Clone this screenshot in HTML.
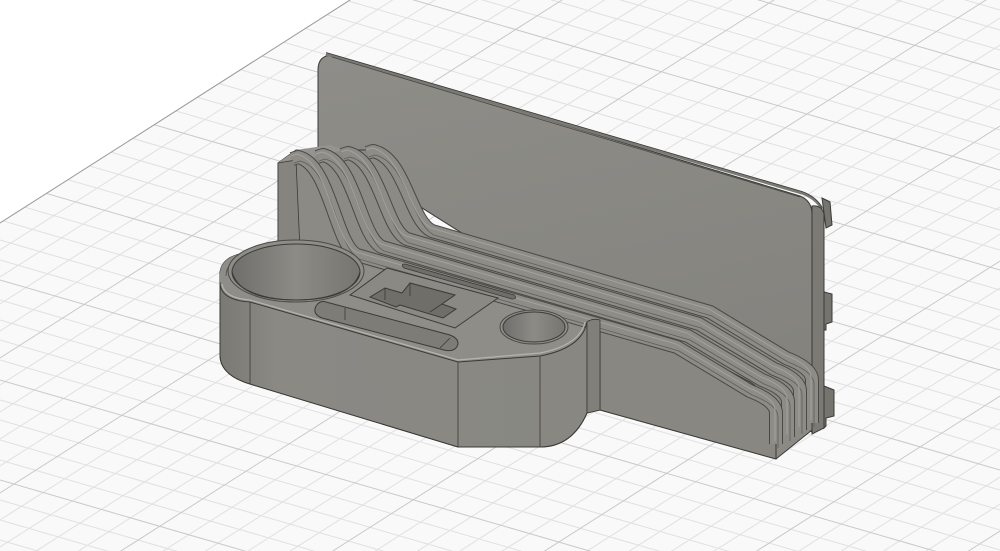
<!DOCTYPE html>
<html><head><meta charset="utf-8">
<style>
html,body{margin:0;padding:0;background:#fff;overflow:hidden;width:1000px;height:551px}
svg{display:block}
</style></head>
<body>
<svg width="1000" height="551" viewBox="0 0 1000 551" xmlns="http://www.w3.org/2000/svg">
<defs>
<clipPath id="plane"><polygon points="0,223 350,0 1000,0 1000,551 0,551"/></clipPath>
<linearGradient id="plate" x1="0" y1="0" x2="0.3" y2="1">
<stop offset="0" stop-color="#8e8d88"/><stop offset="1" stop-color="#84837e"/></linearGradient>
<linearGradient id="hole" x1="0" y1="0" x2="1" y2="0">
<stop offset="0" stop-color="#6f6e6a"/><stop offset="0.5" stop-color="#8c8b86"/><stop offset="1" stop-color="#76756f"/></linearGradient>
<linearGradient id="front" x1="0" y1="0" x2="1" y2="0">
<stop offset="0" stop-color="#7a7974"/><stop offset="0.15" stop-color="#8a8984"/><stop offset="1" stop-color="#888782"/></linearGradient>
<path id="b3" d="M367,153 L373,151 C405,158 410,221 432,231 L710,312 L786,358 Q812,368 812,380 L812,423"/>
<path id="b2" d="M342,155 L348,153 C380,160 385,229 407,239 L699,324 L774,369 Q800,379 800,391 L800,430"/>
<path id="b1" d="M317,157 L323,155 C355,162 360,237 382,247 L688,336 L762,380 Q788,390 788,402 L788,437"/>
<path id="b0" d="M292,159 L298,157 C330,164 335,244 357,255 L677,347 L750,391 Q776,401 776,413 L776,444"/>
</defs>
<rect width="1000" height="551" fill="#ffffff"/>
<g clip-path="url(#plane)">
<rect width="1000" height="551" fill="#f9f9f9"/>
<path fill="none" stroke="#e0e0e0" stroke-width="1" d="M0 -300L1000 -10M0 -280L1000 10M0 -260L1000 30M0 -240L1000 50M0 -200L1000 90M0 -180L1000 110M0 -160L1000 130M0 -140L1000 150M0 -100L1000 190M0 -80L1000 210M0 -60L1000 230M0 -40L1000 250M0 0L1000 290M0 20L1000 310M0 40L1000 330M0 60L1000 350M0 100L1000 390M0 120L1000 410M0 140L1000 430M0 160L1000 450M0 200L1000 490M0 220L1000 510M0 240L1000 530M0 260L1000 550M0 300L1000 590M0 320L1000 610M0 340L1000 630M0 360L1000 650M0 400L1000 690M0 420L1000 710M0 440L1000 730M0 460L1000 750M0 500L1000 790M0 520L1000 810M0 540L1000 830
M0 250L1000 -387M0 277L1000 -360M0 304L1000 -333M0 331L1000 -306M0 385L1000 -252M0 412L1000 -225M0 439L1000 -198M0 466L1000 -171M0 520L1000 -117M0 547L1000 -90M0 574L1000 -63M0 601L1000 -36M0 655L1000 18M0 682L1000 45M0 709L1000 72M0 736L1000 99M0 790L1000 153M0 817L1000 180M0 844L1000 207M0 871L1000 234M0 925L1000 288M0 952L1000 315M0 979L1000 342M0 1006L1000 369M0 1060L1000 423M0 1087L1000 450M0 1114L1000 477M0 1141L1000 504M0 1195L1000 558M0 1222L1000 585"/>
<path fill="none" stroke="#c9c9c9" stroke-width="1" d="M0 -220L1000 70M0 -120L1000 170M0 -20L1000 270M0 80L1000 370M0 180L1000 470M0 280L1000 570M0 380L1000 670M0 480L1000 770
M0 223L1000 -414M0 358L1000 -279M0 493L1000 -144M0 628L1000 -9M0 763L1000 126M0 898L1000 261M0 1033L1000 396M0 1168L1000 531"/>
</g>
<line x1="0" y1="223" x2="350" y2="0" stroke="#9a9a9a" stroke-width="1"/>

<!-- backplate -->
<path d="M318,70 Q318,55 333,55 L800,196 Q812,201 812,214 L812,432 L600,320 L330,150 L318,150 Z" fill="url(#plate)" stroke="#3a3a37" stroke-width="1"/>
<path d="M326,54 L802,193 Q816,198 822,209" fill="none" stroke="#7a7974" stroke-width="3"/>
<path d="M326,54 L802,193 Q816,198 822,209" fill="none" stroke="#3a3a37" stroke-width="0.8" transform="translate(0,-1.5)"/>
<path d="M332,57 L800,197" fill="none" stroke="#4a4945" stroke-width="0.8"/>
<!-- right rim -->
<path d="M812,206 Q822,205 824,214 L824,428 L812,434 Z" fill="#7b7a75" stroke="#3a3a37" stroke-width="1"/>
<path d="M822,198 L830,202 L832,225 L826,228 Z" fill="#75746f" stroke="#3a3a37" stroke-width="1"/>
<path d="M824,292 L832,294 L832,322 L826,324 L826,330 L824,330 Z" fill="#75746f" stroke="#3a3a37" stroke-width="1"/>
<path d="M824,386 L834,390 L834,416 L826,418 L826,426 L824,428 Z" fill="#75746f" stroke="#3a3a37" stroke-width="1"/>

<!-- main body silhouette -->
<path d="M278,163 L296,150 L373,150 C405,158 410,221 432,231 L710,312 L786,358 Q812,368 812,380 L812,430 L776,459 L600,410 L587,413 Q572,447 540,447 L458,447 L250,384 Q220,375 220,355 L220,272 Q222,258 240,254 L278,246 Z" fill="#8b8a85" stroke="#3a3a37" stroke-width="1"/>
<path d="M278,163 L296,150 L330,145 L345,150 L300,160 Z" fill="#959490"/>
<path d="M278,163 L296,160 L300,250 L278,246 Z" fill="#85847f" stroke="#3a3a37" stroke-width="0.8"/>
<path d="M600,327 L677,343 L750,382 Q775,398 776,430 L776,459 L600,410 Z" fill="#888782" stroke="#3a3a37" stroke-width="1"/>

<!-- bands -->
<g fill="none" stroke-linejoin="round">
<use href="#b3" stroke="#4a4945" stroke-width="14"/><use href="#b3" stroke="#8d8c87" stroke-width="12"/>
<use href="#b3" stroke="#5f5e5a" stroke-width="0.8" transform="translate(2,4)"/><use href="#b3" stroke="#a3a29d" stroke-width="1" transform="translate(-1,-3)"/>
<use href="#b2" stroke="#4a4945" stroke-width="14"/><use href="#b2" stroke="#8d8c87" stroke-width="12"/>
<use href="#b2" stroke="#5f5e5a" stroke-width="0.8" transform="translate(2,4)"/><use href="#b2" stroke="#a3a29d" stroke-width="1" transform="translate(-1,-3)"/>
<use href="#b1" stroke="#4a4945" stroke-width="14"/><use href="#b1" stroke="#8d8c87" stroke-width="12"/>
<use href="#b1" stroke="#5f5e5a" stroke-width="0.8" transform="translate(2,4)"/><use href="#b1" stroke="#a3a29d" stroke-width="1" transform="translate(-1,-3)"/>
<use href="#b0" stroke="#4a4945" stroke-width="14"/><use href="#b0" stroke="#8d8c87" stroke-width="12"/>
<use href="#b0" stroke="#5f5e5a" stroke-width="0.8" transform="translate(2,4)"/><use href="#b0" stroke="#a3a29d" stroke-width="1" transform="translate(-1,-3)"/>
</g>

<!-- base top face -->
<path d="M220,272 Q222,258 240,254 L278,246 L300,250 L350,262 L600,332 Q592,352 560,356 L458,362 L250,302 Q220,298 220,282 Z" fill="#8e8d88"/>
<path d="M226,276 Q226,262 244,258 L280,250" fill="none" stroke="#5a5955" stroke-width="1"/>
<path d="M220,282 Q220,300 250,302 L458,362 L540,356 Q582,348 587,322 L587,413 Q572,447 540,447 L458,447 L250,384 Q220,375 220,355 Z" fill="url(#front)" stroke="#3a3a37" stroke-width="1"/>
<path d="M222,284 Q224,298 250,300 L458,360 L540,353 Q580,345 585,322" fill="none" stroke="#b5b4ae" stroke-width="1.2"/>
<line x1="250" y1="302" x2="250" y2="384" stroke="#3a3a37" stroke-width="0.8"/>
<line x1="458" y1="362" x2="458" y2="447" stroke="#3a3a37" stroke-width="0.8"/>
<line x1="540" y1="356" x2="540" y2="447" stroke="#3a3a37" stroke-width="0.8"/>
<path d="M587,322 Q592,318 600,320 L600,410 L587,413 Z" fill="#807f7a" stroke="#3a3a37" stroke-width="0.8"/>

<ellipse cx="296" cy="271" rx="68" ry="31" fill="#8e8d88" stroke="#4a4945" stroke-width="1"/>
<ellipse cx="296" cy="272" rx="64" ry="28" fill="url(#hole)" stroke="#3a3a37" stroke-width="1"/>
<path d="M232,272 Q240,300 296,300 Q352,300 360,272" fill="none" stroke="#3a3a37" stroke-width="1"/>
<ellipse cx="534" cy="327" rx="34" ry="17" fill="#8e8d88" stroke="#4a4945" stroke-width="1"/>
<ellipse cx="534" cy="327" rx="31" ry="15" fill="url(#hole)" stroke="#3a3a37" stroke-width="1"/>
<path d="M326,302 L450,335 Q462,340 456,348 Q452,352 444,350 L322,318 Q312,314 316,306 Q320,300 326,302 Z" fill="#7d7c77" stroke="#3a3a37" stroke-width="1"/>
<path d="M345,308 L345,320 M450,338 L440,348" stroke="#3a3a37" stroke-width="0.8" fill="none"/>
<path d="M350,295 L387,268 L498,298 L455,328 Z" fill="#8a8984" stroke="#3a3a37" stroke-width="1"/>
<path d="M370,297 L385,288 L402,293 L410,283 L455,295 L442,304 L456,309 L443,318 L400,305 L396,307 Z" fill="#6f6e69" stroke="#3a3a37" stroke-width="1"/>
<path d="M385,288 L385,300 M410,283 L410,296 M442,304 L430,312" stroke="#3a3a37" stroke-width="0.8" fill="none"/>
<path d="M405,264 L514,295 Q518,299 512,299 L404,268 Q400,264 405,264 Z" fill="#6f6e69" stroke="#3a3a37" stroke-width="0.8"/>
</svg>
</body></html>
